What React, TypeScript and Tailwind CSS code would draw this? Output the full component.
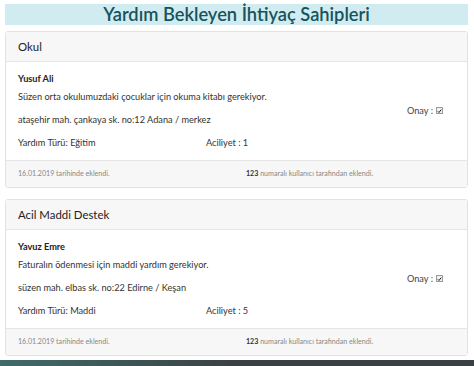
import React from "react"

interface Request {
  title: string
  name: string
  description: string
  address: string
  type: string
  urgency: number
  date: string
  userId: number
}

const requests: Request[] = [
  {
    title: "Okul",
    name: "Yusuf Ali",
    description: "Süzen orta okulumuzdaki çocuklar için okuma kitabı gerekiyor.",
    address: "ataşehir mah. çankaya sk. no:12 Adana / merkez",
    type: "Eğitim",
    urgency: 1,
    date: "16.01.2019",
    userId: 123,
  },
  {
    title: "Acil Maddi Destek",
    name: "Yavuz Emre",
    description: "Faturalın ödenmesi için maddi yardım gerekiyor.",
    address: "süzen mah. elbas sk. no:22 Edirne / Keşan",
    type: "Maddi",
    urgency: 5,
    date: "16.01.2019",
    userId: 123,
  },
]

function CheckMark() {
  return (
    <span className="inline-flex h-[7px] w-[7px] items-center justify-center border border-[#9a9a9a] bg-[#f2f2f2]">
      <svg viewBox="0 0 10 10" className="h-[6px] w-[6px]">
        <path d="M1.5 5.5 L4 8 L8.5 2" stroke="#222" strokeWidth="2" fill="none" />
      </svg>
    </span>
  )
}

function RequestCard({ req }: { req: Request }) {
  return (
    <div className="rounded-[3px] border border-[#e2e2e2] bg-white">
      <div className="flex h-[30px] items-center border-b border-[#e5e5e5] bg-[#f7f7f7] px-[12px] text-[11.4px] text-[#222]">
        {req.title}
      </div>
      <div className="flex items-center pb-[10px] pl-[12px] pr-[24px] pt-[10px]">
        <div className="flex-1 text-[9.2px] leading-[14px] text-[#333]">
          <div className="font-bold text-[#222]">{req.name}</div>
          <p className="mt-[4px]">{req.description}</p>
          <p className="mt-[9px]">{req.address}</p>
          <div className="mt-[9px] flex">
            <span className="w-[188px]">Yardım Türü: {req.type}</span>
            <span>Aciliyet : {req.urgency}</span>
          </div>
        </div>
        <div className="flex items-center gap-[3px] text-[9.2px] text-[#444]">
          Onay : <CheckMark />
        </div>
      </div>
      <div className="flex h-[27px] items-center border-t border-[#e5e5e5] bg-[#f7f7f7] px-[12px] text-[7.1px] text-[#888]">
        <span className="w-[228px]">{req.date} tarihinde eklendi.</span>
        <span>
          <b className="text-[#333]">{req.userId}</b> numaralı kullanıcı tarafından eklendi.
        </span>
      </div>
    </div>
  )
}

export default function App() {
  return (
    <div
      className="flex h-[366px] w-[474px] flex-col overflow-hidden bg-white"
      style={{ fontFamily: 'Lato, "Open Sans", sans-serif' }}
    >
      <div className="flex flex-1 flex-col gap-[11px] pl-[5px] pr-[6px] pt-[4px]">
        <div className="mb-[-5px] flex h-[21px] items-center justify-center bg-[#d1ecf1] text-[18.3px] font-semibold text-[#17535c]">
          Yardım Bekleyen İhtiyaç Sahipleri
        </div>
        {requests.map((r) => (
          <RequestCard key={r.title} req={r} />
        ))}
      </div>
      <div className="h-[6px] shrink-0 bg-gradient-to-r from-[#3f6b6b] via-[#3a4144] to-[#3a4144]" />
    </div>
  )
}
